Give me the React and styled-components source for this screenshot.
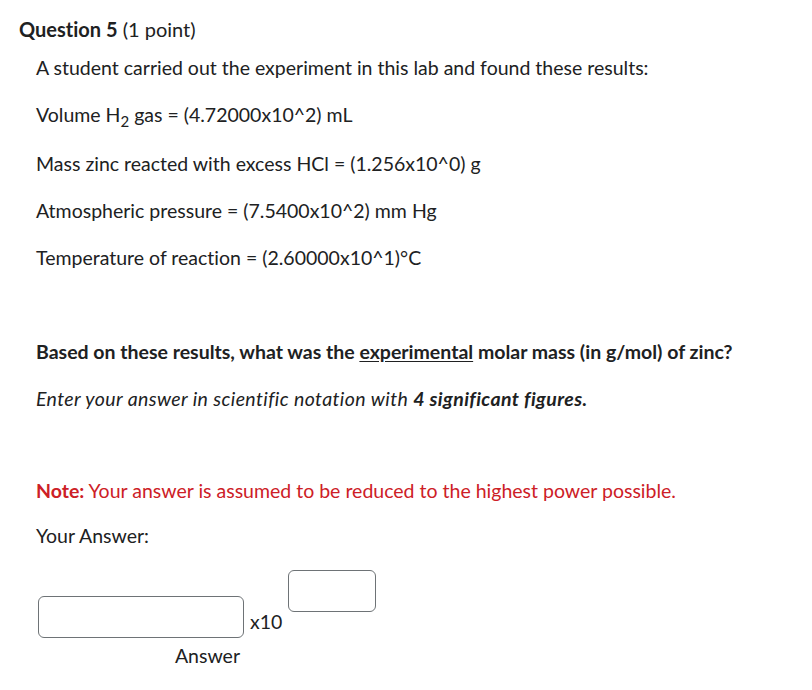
import React from 'react'
import styled, { createGlobalStyle } from 'styled-components'

const GlobalStyle = createGlobalStyle`
  body {
    margin: 0;
    background: #ffffff;
    font-family: Lato, "Open Sans", sans-serif;
    color: #202122;
    font-variant-ligatures: none;
  }
`;

const App = () => {
    return (
        <Page>
            <GlobalStyle />
            <Title><b>Question 5</b> (1 point)</Title>
            <Body>
                <Line>A student carried out the experiment in this lab and found these results:</Line>
                <Line>Volume H<Sub>2</Sub> gas = (4.72000x10^2) mL</Line>
                <Line $top={22}>Mass zinc reacted with excess HCl = (1.256x10^0) g</Line>
                <Line>Atmospheric pressure = (7.5400x10^2) mm Hg</Line>
                <Line>Temperature of reaction = (2.60000x10^1)°C</Line>

                <Line $top={67} $bold>
                    Based on these results, what was the <u>experimental</u> molar mass (in g/mol) of zinc?
                </Line>
                <Line $italic>
                    Enter your answer in scientific notation with <b>4 significant figures.</b>
                </Line>

                <Note $top={65}><b>Note:</b> Your answer is assumed to be reduced to the highest power possible.</Note>
                <Line $top={18}>Your Answer:</Line>

                <AnswerRow>
                    <AnswerGroup>
                        <Input $width={206} $top={26} aria-label="Answer" />
                        <Label>Answer</Label>
                    </AnswerGroup>
                    <Times>x10</Times>
                    <Input $width={88} $top={0} aria-label="Exponent" />
                </AnswerRow>
            </Body>
        </Page>
    )
}

const Page = styled.div`
    width: 812px;
    height: 690px;
    padding: 16px 0 0 19px;
    box-sizing: border-box;
    overflow: hidden;
`;

const Title = styled.div`
    font-size: 20px;
    line-height: 27px;

    b {
        font-weight: 700;
    }
`;

const Body = styled.div`
    display: flex;
    flex-direction: column;
    padding-left: 17px;
    margin-top: 11px;
`;

const Line = styled.p`
    margin: ${p => (p.$top ?? 20)}px 0 0;
    font-size: 19.5px;
    line-height: 27px;
    font-weight: ${p => (p.$bold ? 700 : 400)};
    font-style: ${p => (p.$italic ? 'italic' : 'normal')};
    letter-spacing: ${p => (p.$italic ? '0.4px' : 'normal')};

    &:first-child {
        margin-top: 0;
    }

    u {
        text-underline-offset: 2px;
    }
`;

const Sub = styled.sub`
    font-size: 15px;
    line-height: 0;
    vertical-align: -5px;
`;

const Note = styled(Line)`
    color: #cd2026;
`;

const AnswerRow = styled.div`
    display: flex;
    align-items: flex-start;
    margin-top: 21px;
    padding-left: 2px;
`;

const AnswerGroup = styled.div`
    display: flex;
    flex-direction: column;
    align-items: flex-end;
`;

const Input = styled.input`
    width: ${p => p.$width}px;
    height: 42px;
    margin-top: ${p => p.$top}px;
    box-sizing: border-box;
    border: 1px solid #6e7376;
    border-radius: 6px;
    background: #ffffff;
    font-family: inherit;
    font-size: 18px;
    padding: 0 10px;
    outline: none;
`;

const Label = styled.span`
    margin-top: 8px;
    padding-right: 4px;
    font-size: 19.5px;
    line-height: 20px;
`;

const Times = styled.span`
    margin: 42px 6px 0 6px;
    font-size: 19.5px;
    line-height: 20px;
`;

export default App
